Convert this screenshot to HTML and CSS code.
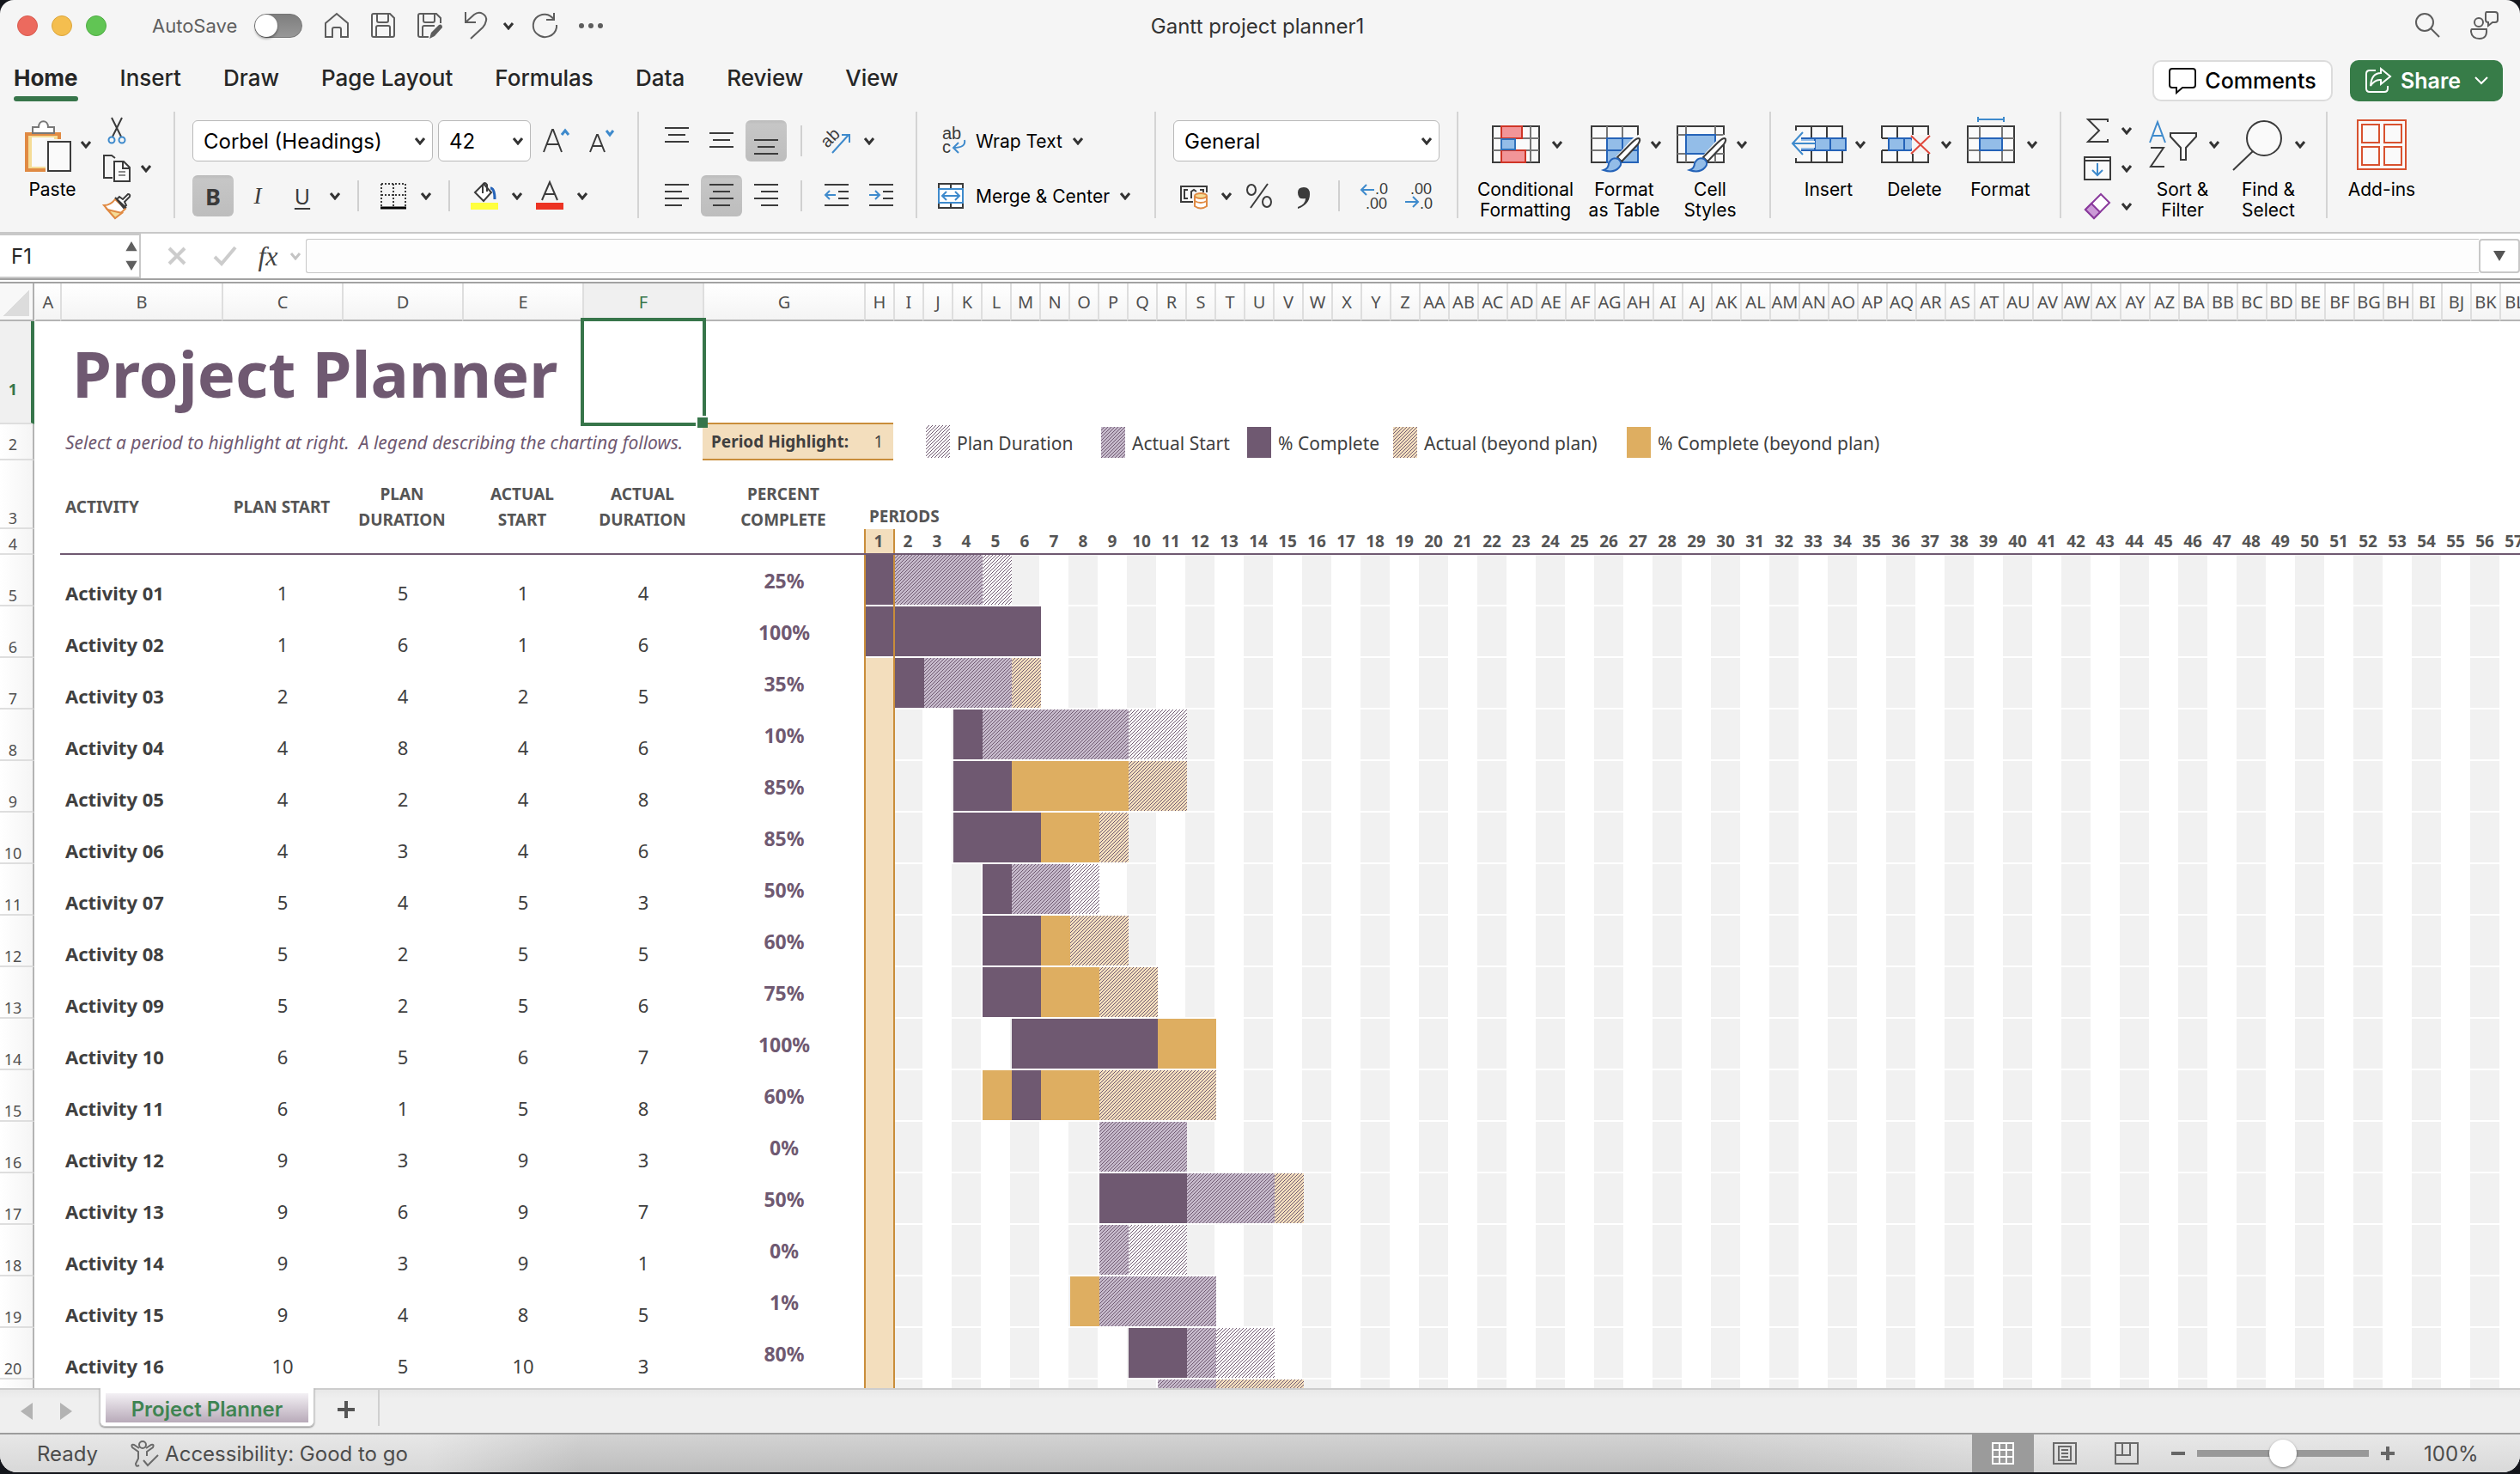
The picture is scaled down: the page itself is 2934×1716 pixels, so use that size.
FILE: index.html
```html
<!DOCTYPE html>
<html lang="en">
<head>
<meta charset="utf-8">
<title>Gantt project planner1</title>
<link rel="stylesheet" href="styles.css">
</head>
<body>
<svg class="sprite" aria-hidden="true">
  <symbol id="chev" viewBox="0 0 14 10"><path d="M2 2l5 6 5-6" fill="none" stroke="currentColor" stroke-width="3"/></symbol>
</svg>
<div class="window">
  <header class="titlebar">
    <div class="title-left">
      <div class="lights"><button class="light close" aria-label="Close"></button><button class="light minimise" aria-label="Minimise"></button><button class="light expand" aria-label="Zoom"></button></div>
      <label class="autosave">AutoSave <input type="checkbox" class="toggle"></label>
      <div class="quick">
        <button aria-label="Home"><svg viewBox="0 0 32 32"><path d="M3 13L16 2l13 11v16h-8v-9q0-2-2-2h-6q-2 0-2 2v9H3z"/></svg></button>
        <button aria-label="Save"><svg viewBox="0 0 32 32"><path d="M5 2h19l5 5v20q0 2-2 2H5q-2 0-2-2V4q0-2 2-2zM9 2v8q0 2 2 2h9q2 0 2-2V2M8 29V18q0-2 2-2h12q2 0 2 2v11"/></svg></button>
        <button aria-label="Save as"><svg viewBox="0 0 32 32"><path d="M15 29H5q-2 0-2-2V4q0-2 2-2h19l5 5v6M9 2v8q0 2 2 2h9q2 0 2-2V2M8 29V18q0-2 2-2h12"/><path class="solid" d="M16 31l2-7 9-9q2-1 3 0t1 3l-9 10z"/></svg></button>
        <button aria-label="Undo"><svg viewBox="0 0 32 32"><path d="M4 0v12h12M4 12l10-9q5-4 10-1t4 8-4 8L10 31"/></svg></button>
        <button class="mini" aria-label="Undo history"><svg class="chev"><use href="#chev"/></svg></button>
        <button aria-label="Redo"><svg viewBox="0 0 32 32"><path d="M27 1v8h-9M27 9C22 1 12 1 6 7c-5 6-4 15 2 19 7 6 20 3 22-8v-3"/></svg></button>
        <button aria-label="More"><svg viewBox="0 0 32 32"><g class="solid"><circle cx="5" cy="16" r="3"/><circle cx="16" cy="16" r="3"/><circle cx="27" cy="16" r="3"/></g></svg></button>
      </div>
    </div>
    <h1 class="doc-name">Gantt project planner1</h1>
    <div class="title-right">
      <button aria-label="Search"><svg viewBox="0 0 32 32"><circle cx="13" cy="12" r="10"/><path d="M20 19l10 10"/></svg></button>
      <button aria-label="Contacts"><svg viewBox="0 0 32 32"><circle cx="10" cy="12" r="5"/><path d="M2 20h17q1 11-8 11T1 23q0-3 1-3zM19 0h10q3 0 3 3v6q0 3-3 3h-3l-5 4v-4q-3 0-3-3V3q0-3 1-3z"/></svg></button>
    </div>
  </header>

  <nav class="tabs" aria-label="Ribbon tabs">
    <button class="tab active">Home</button><button class="tab">Insert</button><button class="tab">Draw</button><button class="tab">Page Layout</button><button class="tab">Formulas</button><button class="tab">Data</button><button class="tab">Review</button><button class="tab">View</button>
    <div class="tab-actions">
      <button class="comments"><svg viewBox="0 0 32 32"><path d="M4 2h24q3 0 3 3v16q0 3-3 3H16l-7 6v-6H4q-3 0-3-3V5q0-3 3-3z"/></svg>Comments</button>
      <button class="share"><svg viewBox="0 0 32 32"><path d="M13 4H6q-4 0-4 4v17q0 4 4 4h17q4 0 4-4v-3M19 2l11 9-11 9v-5Q12 14 7 22 8 7 19 7z"/></svg>Share<svg class="thin-chev" viewBox="0 0 16 10"><path d="M1 1l7 7 7-7"/></svg></button>
    </div>
  </nav>

  <section class="ribbon" aria-label="Home">
    <div class="group clipboard">
      <button class="big paste"><span class="big-icon"><svg viewBox="0 0 56 60"><path d="M2 16h38v42H2z" fill="#f5dc96" stroke="#e08a43" stroke-width="4"/><path d="M8 20h26v34H8z" fill="#fafafa"/><path d="M9 15V8h7c0-9 11-9 11 0h7v7z" fill="#fff" stroke="#777" stroke-width="2"/><path d="M24 22h32v38H24z" fill="#f5f5f5"/><path d="M27 25h26v34H27z" fill="#fafafa" stroke="#3b3b3b" stroke-width="2"/></svg><svg class="chev"><use href="#chev"/></svg></span><span class="big-label">Paste</span></button>
      <div class="stack">
        <div><button class="small-icon" aria-label="Cut"><svg viewBox="0 0 32 32"><path d="M10 1l11 22M22 1L11 23" stroke="#3b3b3b" stroke-width="2"/><circle cx="10" cy="27" r="3.500" stroke="#3e8acc" stroke-width="2"/><circle cx="22" cy="27" r="3.500" stroke="#3e8acc" stroke-width="2"/></svg></button></div>
        <div><button class="small-icon" aria-label="Copy"><svg viewBox="0 0 32 32"><path d="M11 27H1V1h9l4 3" stroke="#3b3b3b" stroke-width="2"/><path d="M13 8h11l7 7v16H13zM23 8v8h8" fill="#fafafa" stroke="#3b3b3b" stroke-width="2"/><path d="M18 20h8M18 24h8" stroke="#888" stroke-width="2"/></svg></button><button class="mini" aria-label="Copy options"><svg class="chev"><use href="#chev"/></svg></button></div>
        <div><button class="small-icon" aria-label="Format painter"><svg viewBox="0 0 32 32"><path d="M1 15q8 0 13-7l12 11-12 11z" fill="#fff" stroke="#e08a43" stroke-width="2"/><path d="M5 20l17 4-8 6z" fill="#f5dc96" stroke="#e08a43" stroke-width="2"/><path d="M14 6l13 12M16 8l3-3 4 3 6-6q3 0 2 3l-6 6 2 4-3 3z" fill="#fff" stroke="#3b3b3b" stroke-width="2"/></svg></button></div>
      </div>
    </div>

    <div class="group rows">
      <div class="row">
        <select class="combo font-name" aria-label="Font"><option>Corbel (Headings)</option></select>
        <select class="combo font-size" aria-label="Font size"><option>42</option></select>
        <button class="tool glyph" aria-label="Increase font size"><svg viewBox="0 0 32 32"><path d="M1 29L11 3h1l10 26M5 20h13" stroke="#3b3b3b" stroke-width="2"/><path d="M22 9l4-5 4 5" stroke="#3e8acc" stroke-width="3"/></svg></button>
        <button class="tool glyph" aria-label="Decrease font size"><svg viewBox="0 0 32 32"><path d="M3 29l8-20h1l8 20M6 22h11" stroke="#3b3b3b" stroke-width="2"/><path d="M22 4l4 5 4-5" stroke="#3e8acc" stroke-width="3"/></svg></button>
      </div>
      <div class="row">
        <button class="tool on bold">B</button><button class="tool italic">I</button><button class="tool underline">U</button><button class="mini" aria-label="Underline options"><svg class="chev"><use href="#chev"/></svg></button>
        <span class="bar-sep"></span>
        <button class="tool" aria-label="Borders"><svg viewBox="0 0 32 32"><path d="M2 2h28v26M2 2v26M16 2v26M2 15h28" stroke="#3b3b3b" stroke-width="2" stroke-dasharray="2 2"/><path d="M1 30h30" stroke="#000" stroke-width="3"/></svg></button><button class="mini" aria-label="Border options"><svg class="chev"><use href="#chev"/></svg></button>
        <span class="bar-sep"></span>
        <button class="tool" aria-label="Fill colour"><svg viewBox="0 0 32 32"><path d="M5 12L15 2l9 10-9 10zM14 13V3q2-4 5 0v8" fill="#fff" stroke="#3b3b3b" stroke-width="2"/><path d="M23 7q5 0 5 13" stroke="#2563b8" stroke-width="3"/><path d="M0 24h32v8H0z" fill="#ffff3d"/></svg></button><button class="mini" aria-label="Fill colour options"><svg class="chev"><use href="#chev"/></svg></button>
        <button class="tool" aria-label="Font colour"><svg viewBox="0 0 32 32"><path d="M7 21L16 0l9 21M11 14h11" stroke="#3b3b3b" stroke-width="2"/><path d="M0 24h32v8H0z" fill="#ec3323"/></svg></button><button class="mini" aria-label="Font colour options"><svg class="chev"><use href="#chev"/></svg></button>
      </div>
    </div>

    <div class="group rows">
      <div class="row">
        <button class="tool" aria-label="Top align"><svg viewBox="0 0 32 32"><path class="ink" d="M2 1h28M6 9h20M2 17h28"/></svg></button>
        <button class="tool" aria-label="Middle align"><svg viewBox="0 0 32 32"><path class="ink" d="M2 7h28M6 15h20M2 23h28"/></svg></button>
        <button class="tool on" aria-label="Bottom align"><svg viewBox="0 0 32 32"><path class="ink" d="M2 15h28M6 23h20M2 31h28"/></svg></button>
        <span class="bar-sep"></span>
        <button class="tool" aria-label="Orientation"><svg viewBox="0 0 32 32"><text x="2" y="23" class="icon-text" transform="rotate(-45 6 20)" font-size="20">ab</text><path d="M11 30L30 9M22 9h9v9" stroke="#3e8acc" stroke-width="2"/></svg></button><button class="mini" aria-label="Orientation options"><svg class="chev"><use href="#chev"/></svg></button>
      </div>
      <div class="row">
        <button class="tool" aria-label="Align left"><svg viewBox="0 0 32 32"><path class="ink" d="M2 3h28M2 11h20M2 19h28M2 27h20"/></svg></button>
        <button class="tool on" aria-label="Centre"><svg viewBox="0 0 32 32"><path class="ink" d="M2 3h28M6 11h20M2 19h28M6 27h20"/></svg></button>
        <button class="tool" aria-label="Align right"><svg viewBox="0 0 32 32"><path class="ink" d="M2 3h28M10 11h20M2 19h28M10 27h20"/></svg></button>
        <span class="bar-sep"></span>
        <button class="tool" aria-label="Decrease indent"><svg viewBox="0 0 32 32"><path class="ink" d="M2 3h28M18 11h12M18 19h12M2 27h28"/><path d="M15 15H3M8 10l-5 5 5 5" stroke="#3e8acc" stroke-width="2"/></svg></button>
        <button class="tool" aria-label="Increase indent"><svg viewBox="0 0 32 32"><path class="ink" d="M2 3h28M18 11h12M18 19h12M2 27h28"/><path d="M2 15h12M9 10l5 5-5 5" stroke="#3e8acc" stroke-width="2"/></svg></button>
      </div>
    </div>

    <div class="group rows">
      <div class="row"><button class="wide"><svg viewBox="0 0 40 32"><text x="9" y="14" class="icon-text" font-size="20">ab</text><text x="9" y="30" class="icon-text" font-size="20">c</text><path d="M35 15q2 9-13 9M28 18l-6 6 6 6" stroke="#3e8acc" stroke-width="2"/></svg>Wrap Text<svg class="chev"><use href="#chev"/></svg></button></div>
      <div class="row"><button class="wide"><svg viewBox="0 0 40 32"><path d="M5 2h28v28H5zM19 2v28" fill="#fff" stroke="#3b3b3b" stroke-width="2"/><path d="M5 8h28v16H5z" fill="#fff" stroke="#3e8acc" stroke-width="2"/><path d="M9 16h20M14 11l-5 5 5 5M24 11l5 5-5 5" stroke="#3e8acc" stroke-width="2"/></svg>Merge &amp; Center<svg class="chev"><use href="#chev"/></svg></button></div>
    </div>

    <div class="group rows">
      <div class="row"><select class="combo number-format" aria-label="Number format"><option>General</option></select></div>
      <div class="row">
        <button class="tool" aria-label="Currency"><svg viewBox="0 0 32 32"><path d="M1 5h30v18H1z" fill="#fafafa" stroke="#3b3b3b" stroke-width="2"/><path d="M9 9H5v10h4M13 19v-8l3-2 3 2M23 9h4v4" stroke="#3b3b3b" stroke-width="2"/><path d="M15 12h18v20H15z" fill="#f5f5f5"/><path d="M17 16v12q7 5 14 0V16M17 22q7 4 14 0" fill="#fff" stroke="#e08a43" stroke-width="2"/><ellipse cx="24" cy="16" rx="7" ry="3" fill="#f5dc96" stroke="#e08a43" stroke-width="2"/></svg></button><button class="mini" aria-label="Currency options"><svg class="chev"><use href="#chev"/></svg></button>
        <button class="tool" aria-label="Percent"><svg viewBox="0 0 32 32"><path d="M26 2L6 30" stroke="#3b3b3b" stroke-width="2"/><ellipse cx="7" cy="9" rx="5" ry="6" stroke="#3b3b3b" stroke-width="2"/><ellipse cx="25" cy="23" rx="5" ry="6" stroke="#3b3b3b" stroke-width="2"/></svg></button>
        <button class="tool" aria-label="Comma"><svg viewBox="0 0 32 32"><path d="M9 29q9-3 9-10-9 2-9-7 0-6 7-6t7 8q0 12-14 17z" fill="#3b3b3b"/></svg></button>
        <span class="bar-sep"></span>
        <button class="tool" aria-label="Increase decimal"><svg viewBox="0 0 32 32"><text x="17" y="14" class="icon-text" font-size="18">.0</text><text x="6" y="31" class="icon-text" font-size="18">.00</text><path d="M16 9H1M7 3L1 9l6 6" stroke="#3e8acc" stroke-width="2"/></svg></button>
        <button class="tool" aria-label="Decrease decimal"><svg viewBox="0 0 32 32"><text x="6" y="14" class="icon-text" font-size="18">.00</text><text x="17" y="31" class="icon-text" font-size="18">.0</text><path d="M0 23h15M9 17l6 6-6 6" stroke="#3e8acc" stroke-width="2"/></svg></button>
      </div>
    </div>

    <div class="group">
      <button class="big cond"><span class="big-icon"><svg viewBox="0 0 56 60"><path d="M1 7h54v42H1z" fill="#fafafa" stroke="#3b3b3b" stroke-width="2"/><path d="M1 21h54M1 35h54M11 7v42M45 7v42" stroke="#777" stroke-width="2"/><path d="M11 7h24v14H11zM11 35h28v14H11z" fill="#f29598" stroke="#cf3526" stroke-width="2"/><path d="M11 22h16v12H11z" fill="#93bde8" stroke="#3172bb" stroke-width="2"/></svg><svg class="chev"><use href="#chev"/></svg></span><span class="big-label">Conditional<br>Formatting</span></button>
      <button class="big"><span class="big-icon"><svg viewBox="0 0 56 60"><path d="M1 7h54v42H1z" fill="#fafafa" stroke="#3b3b3b" stroke-width="2"/><path d="M1 21h54M1 35h54M19 7v42M37 7v42" stroke="#777" stroke-width="2"/><path d="M19 21h36v28H19zM37 21v28M19 35h36" fill="#93bde8" stroke="#2563b8" stroke-width="2"/><path d="M12 60q14 4 22-10L62 18q-6-4-14 4L28 44q-8 2-10 11z" fill="#f5f5f5"/><path d="M56 21q3 1-1 7L36 48l-5-5 17-17q5-5 8-5z" fill="#fff" stroke="#3b3b3b" stroke-width="2"/><path d="M15 58q6-2 6-8 4-8 11-5 6 5 1 10-6 7-18 3z" fill="#93bde8" stroke="#2563b8" stroke-width="2"/></svg><svg class="chev"><use href="#chev"/></svg></span><span class="big-label">Format<br>as Table</span></button>
      <button class="big"><span class="big-icon"><svg viewBox="0 0 56 60"><path d="M1 7h54v42H1z" fill="#fafafa" stroke="#3b3b3b" stroke-width="2"/><path d="M1 17h54M1 39h54M11 7v42M45 7v42" stroke="#777" stroke-width="2"/><path d="M11 17h34v22H11z" fill="#93bde8" stroke="#2563b8" stroke-width="2"/><path d="M12 60q14 4 22-10L62 18q-6-4-14 4L28 44q-8 2-10 11z" fill="#f5f5f5"/><path d="M56 21q3 1-1 7L36 48l-5-5 17-17q5-5 8-5z" fill="#fff" stroke="#3b3b3b" stroke-width="2"/><path d="M15 58q6-2 6-8 4-8 11-5 6 5 1 10-6 7-18 3z" fill="#93bde8" stroke="#2563b8" stroke-width="2"/></svg><svg class="chev"><use href="#chev"/></svg></span><span class="big-label">Cell<br>Styles</span></button>
    </div>

    <div class="group cells">
      <button class="big"><span class="big-icon"><svg viewBox="0 0 56 60"><path d="M1 7h54v42H1zM19 7v42M37 7v42" fill="#fafafa" stroke="#3b3b3b" stroke-width="2"/><path d="M3 21h56v14H3zM23 21v14M41 21v14" fill="#93bde8" stroke="#2563b8" stroke-width="2"/><path d="M-6 12h13v12h16v8H7v12H-6z" fill="#f5f5f5"/><path d="M23 27H-3M9 14L-3 27 9 40" stroke="#3e8acc" stroke-width="2"/></svg><svg class="chev"><use href="#chev"/></svg></span><span class="big-label">Insert</span></button>
      <button class="big"><span class="big-icon"><svg viewBox="0 0 56 60"><path d="M1 7h54v42H1zM19 7v42M37 7v42" fill="#fafafa" stroke="#3b3b3b" stroke-width="2"/><path d="M0 21h9v14H0z" fill="#f5f5f5"/><path d="M1 21h8M1 35h8" stroke="#3b3b3b" stroke-width="2"/><path d="M9 21h26l6 7-6 7H9zM27 21v14" fill="#93bde8" stroke="#2563b8" stroke-width="2"/><path d="M36 17h22v22H36z" fill="#f5f5f5"/><path d="M35 18l22 21M57 18L35 39" stroke="#e0483c" stroke-width="2"/></svg><svg class="chev"><use href="#chev"/></svg></span><span class="big-label">Delete</span></button>
      <button class="big"><span class="big-icon"><svg viewBox="0 0 56 60"><path d="M1 7h54v42H1z" fill="#fafafa" stroke="#3b3b3b" stroke-width="2"/><path d="M1 21h54M1 35h54M15 7v42M41 7v42" stroke="#777" stroke-width="2"/><path d="M15 21h26v14H15z" fill="#93bde8" stroke="#2563b8" stroke-width="2"/><path d="M13-1h30M13-4v6M43-4v6" stroke="#3e8acc" stroke-width="2"/></svg><svg class="chev"><use href="#chev"/></svg></span><span class="big-label">Format</span></button>
    </div>

    <div class="group editing">
      <div class="stack">
        <div><button class="small-icon" aria-label="AutoSum"><svg viewBox="0 0 32 32"><path d="M28 6V3H5l13 13L5 29h23v-3" stroke="#3b3b3b" stroke-width="2"/></svg></button><button class="mini" aria-label="AutoSum options"><svg class="chev"><use href="#chev"/></svg></button></div>
        <div><button class="small-icon" aria-label="Fill"><svg viewBox="0 0 32 32"><path d="M1 3h30v26H1zM1 7h30" fill="#fafafa" stroke="#3b3b3b" stroke-width="2"/><path d="M16 10v14M10 18l6 6 6-6" stroke="#3e8acc" stroke-width="2"/></svg></button><button class="mini" aria-label="Fill options"><svg class="chev"><use href="#chev"/></svg></button></div>
        <div><button class="small-icon" aria-label="Clear"><svg viewBox="0 0 32 32"><path d="M20 2l10 10-18 18L2 20z" fill="#fff" stroke="#8a3a9c" stroke-width="2"/><path d="M9 13l10 10-7 7L2 20z" fill="#cb9ad6" stroke="#8a3a9c" stroke-width="2"/></svg></button><button class="mini" aria-label="Clear options"><svg class="chev"><use href="#chev"/></svg></button></div>
      </div>
      <button class="big"><span class="big-icon"><svg viewBox="0 0 56 60"><path d="M1 26L10 2l9 24M4 18h12" stroke="#3e8acc" stroke-width="2"/><path d="M2 32h15L2 54h16" stroke="#3b3b3b" stroke-width="2"/><path d="M25 15h30v4L43 32v14h-6V32L25 19z" fill="#fafafa" stroke="#3b3b3b" stroke-width="2"/></svg><svg class="chev"><use href="#chev"/></svg></span><span class="big-label">Sort &amp;<br>Filter</span></button>
      <button class="big"><span class="big-icon"><svg viewBox="0 0 56 60"><circle cx="34" cy="21" r="20" fill="#fafafa" stroke="#3b3b3b" stroke-width="2"/><path d="M21 36L-2 58" stroke="#3b3b3b" stroke-width="2"/></svg><svg class="chev"><use href="#chev"/></svg></span><span class="big-label">Find &amp;<br>Select</span></button>
    </div>

    <div class="group last">
      <button class="big addins"><span class="big-icon"><svg viewBox="0 0 56 60"><path d="M0 0h56v57H0zM5 5h20v21H5zM31 5h20v21H31zM5 31h20v21H5zM31 31h20v21H31z" fill="#fafafa" stroke="#d8522f" stroke-width="2"/></svg></span><span class="big-label">Add-ins</span></button>
    </div>
  </section>

  <section class="formula-bar" aria-label="Formula bar">
    <div class="name-box"><input type="text" value="F1" aria-label="Name box"><svg viewBox="0 0 14 36"><path d="M7 0l7 12H0zM7 36l7-12H0z"/></svg></div>
    <button class="fx-tool faint" aria-label="Cancel"><svg viewBox="0 0 28 28"><path d="M5 5l18 18M23 5L5 23"/></svg></button>
    <button class="fx-tool faint" aria-label="Enter"><svg viewBox="0 0 28 28"><path d="M2 15l8 8L26 4"/></svg></button>
    <button class="fx-tool fx" aria-label="Insert function">fx</button>
    <button class="mini fx-more" aria-label="Functions"><svg class="chev"><use href="#chev"/></svg></button>
    <input class="formula" type="text" aria-label="Formula">
    <button class="expand-bar" aria-label="Expand formula bar"><svg viewBox="0 0 14 12"><path d="M0 0h14L7 12z"/></svg></button>
  </section>

  <main class="sheet">
    <table class="grid">
      <colgroup><col class="c-head"><col class="c-a"><col class="c-name"><col class="c-num" span="4"><col class="c-name"><col class="c-period" span="57"></colgroup>
      <thead><tr class="letters"><th class="corner"></th><th>A</th><th>B</th><th>C</th><th>D</th><th>E</th><th class="picked">F</th><th>G</th><th>H</th><th>I</th><th>J</th><th>K</th><th>L</th><th>M</th><th>N</th><th>O</th><th>P</th><th>Q</th><th>R</th><th>S</th><th>T</th><th>U</th><th>V</th><th>W</th><th>X</th><th>Y</th><th>Z</th><th>AA</th><th>AB</th><th>AC</th><th>AD</th><th>AE</th><th>AF</th><th>AG</th><th>AH</th><th>AI</th><th>AJ</th><th>AK</th><th>AL</th><th>AM</th><th>AN</th><th>AO</th><th>AP</th><th>AQ</th><th>AR</th><th>AS</th><th>AT</th><th>AU</th><th>AV</th><th>AW</th><th>AX</th><th>AY</th><th>AZ</th><th>BA</th><th>BB</th><th>BC</th><th>BD</th><th>BE</th><th>BF</th><th>BG</th><th>BH</th><th>BI</th><th>BJ</th><th>BK</th><th>BL</th></tr></thead>
      <tbody>
        <tr class="r1"><th class="rh picked">1</th><td></td><td colspan="4" class="title">Project Planner</td><td class="selected"></td><td colspan="2" class="above-highlight"></td><td colspan="56"></td></tr>
        <tr class="r2"><th class="rh">2</th><td></td><td colspan="5" class="note">Select a period to highlight at right.&nbsp; A legend describing the charting follows.</td><td class="hl hl-label">Period Highlight:</td><td class="hl hl-value">1</td>
          <td colspan="56"><ul class="legend"><li><i class="swatch tall plan"></i>Plan Duration</li><li><i class="swatch actual"></i>Actual Start</li><li><i class="swatch done"></i>% Complete</li><li class="long"><i class="swatch beyond"></i>Actual (beyond plan)</li><li class="long"><i class="swatch done-beyond"></i>% Complete (beyond plan)</li></ul></td></tr>
        <tr class="r3"><th class="rh">3</th><td rowspan="2"></td><th rowspan="2" class="head left">ACTIVITY</th><th rowspan="2" class="head">PLAN START</th><th rowspan="2" class="head">PLAN<br>DURATION</th><th rowspan="2" class="head">ACTUAL<br>START</th><th rowspan="2" class="head">ACTUAL<br>DURATION</th><th rowspan="2" class="head">PERCENT<br>COMPLETE</th><th colspan="57" class="periods">PERIODS</th></tr>
        <tr class="r4"><th class="rh">4</th><th class="current">1</th><th>2</th><th>3</th><th>4</th><th>5</th><th>6</th><th>7</th><th>8</th><th>9</th><th>10</th><th>11</th><th>12</th><th>13</th><th>14</th><th>15</th><th>16</th><th>17</th><th>18</th><th>19</th><th>20</th><th>21</th><th>22</th><th>23</th><th>24</th><th>25</th><th>26</th><th>27</th><th>28</th><th>29</th><th>30</th><th>31</th><th>32</th><th>33</th><th>34</th><th>35</th><th>36</th><th>37</th><th>38</th><th>39</th><th>40</th><th>41</th><th>42</th><th>43</th><th>44</th><th>45</th><th>46</th><th>47</th><th>48</th><th>49</th><th>50</th><th>51</th><th>52</th><th>53</th><th>54</th><th>55</th><th>56</th><th>57</th></tr>
        <tr class="act"><th class="rh">5</th><td></td><td class="name">Activity 01</td><td>1</td><td>5</td><td>1</td><td>4</td><td class="pct">25%</td><td colspan="57" class="chart"><div class="bars"><i class="done" style="--s:1;--n:1"></i><i class="actual" style="--s:2;--n:3"></i><i class="plan" style="--s:5;--n:1"></i></div></td></tr>
        <tr class="act"><th class="rh">6</th><td></td><td class="name">Activity 02</td><td>1</td><td>6</td><td>1</td><td>6</td><td class="pct">100%</td><td colspan="57" class="chart"><div class="bars"><i class="done" style="--s:1;--n:6"></i></div></td></tr>
        <tr class="act"><th class="rh">7</th><td></td><td class="name">Activity 03</td><td>2</td><td>4</td><td>2</td><td>5</td><td class="pct">35%</td><td colspan="57" class="chart"><div class="bars"><i class="done" style="--s:2;--n:1"></i><i class="actual" style="--s:3;--n:3"></i><i class="beyond" style="--s:6;--n:1"></i></div></td></tr>
        <tr class="act"><th class="rh">8</th><td></td><td class="name">Activity 04</td><td>4</td><td>8</td><td>4</td><td>6</td><td class="pct">10%</td><td colspan="57" class="chart"><div class="bars"><i class="done" style="--s:4;--n:1"></i><i class="actual" style="--s:5;--n:5"></i><i class="plan" style="--s:10;--n:2"></i></div></td></tr>
        <tr class="act"><th class="rh">9</th><td></td><td class="name">Activity 05</td><td>4</td><td>2</td><td>4</td><td>8</td><td class="pct">85%</td><td colspan="57" class="chart"><div class="bars"><i class="done" style="--s:4;--n:2"></i><i class="done-beyond" style="--s:6;--n:4"></i><i class="beyond" style="--s:10;--n:2"></i></div></td></tr>
        <tr class="act"><th class="rh">10</th><td></td><td class="name">Activity 06</td><td>4</td><td>3</td><td>4</td><td>6</td><td class="pct">85%</td><td colspan="57" class="chart"><div class="bars"><i class="done" style="--s:4;--n:3"></i><i class="done-beyond" style="--s:7;--n:2"></i><i class="beyond" style="--s:9;--n:1"></i></div></td></tr>
        <tr class="act"><th class="rh">11</th><td></td><td class="name">Activity 07</td><td>5</td><td>4</td><td>5</td><td>3</td><td class="pct">50%</td><td colspan="57" class="chart"><div class="bars"><i class="done" style="--s:5;--n:1"></i><i class="actual" style="--s:6;--n:2"></i><i class="plan" style="--s:8;--n:1"></i></div></td></tr>
        <tr class="act"><th class="rh">12</th><td></td><td class="name">Activity 08</td><td>5</td><td>2</td><td>5</td><td>5</td><td class="pct">60%</td><td colspan="57" class="chart"><div class="bars"><i class="done" style="--s:5;--n:2"></i><i class="done-beyond" style="--s:7;--n:1"></i><i class="beyond" style="--s:8;--n:2"></i></div></td></tr>
        <tr class="act"><th class="rh">13</th><td></td><td class="name">Activity 09</td><td>5</td><td>2</td><td>5</td><td>6</td><td class="pct">75%</td><td colspan="57" class="chart"><div class="bars"><i class="done" style="--s:5;--n:2"></i><i class="done-beyond" style="--s:7;--n:2"></i><i class="beyond" style="--s:9;--n:2"></i></div></td></tr>
        <tr class="act"><th class="rh">14</th><td></td><td class="name">Activity 10</td><td>6</td><td>5</td><td>6</td><td>7</td><td class="pct">100%</td><td colspan="57" class="chart"><div class="bars"><i class="done" style="--s:6;--n:5"></i><i class="done-beyond" style="--s:11;--n:2"></i></div></td></tr>
        <tr class="act"><th class="rh">15</th><td></td><td class="name">Activity 11</td><td>6</td><td>1</td><td>5</td><td>8</td><td class="pct">60%</td><td colspan="57" class="chart"><div class="bars"><i class="done-beyond" style="--s:5;--n:1"></i><i class="done" style="--s:6;--n:1"></i><i class="done-beyond" style="--s:7;--n:2"></i><i class="beyond" style="--s:9;--n:4"></i></div></td></tr>
        <tr class="act"><th class="rh">16</th><td></td><td class="name">Activity 12</td><td>9</td><td>3</td><td>9</td><td>3</td><td class="pct">0%</td><td colspan="57" class="chart"><div class="bars"><i class="actual" style="--s:9;--n:3"></i></div></td></tr>
        <tr class="act"><th class="rh">17</th><td></td><td class="name">Activity 13</td><td>9</td><td>6</td><td>9</td><td>7</td><td class="pct">50%</td><td colspan="57" class="chart"><div class="bars"><i class="done" style="--s:9;--n:3"></i><i class="actual" style="--s:12;--n:3"></i><i class="beyond" style="--s:15;--n:1"></i></div></td></tr>
        <tr class="act"><th class="rh">18</th><td></td><td class="name">Activity 14</td><td>9</td><td>3</td><td>9</td><td>1</td><td class="pct">0%</td><td colspan="57" class="chart"><div class="bars"><i class="actual" style="--s:9;--n:1"></i><i class="plan" style="--s:10;--n:2"></i></div></td></tr>
        <tr class="act"><th class="rh">19</th><td></td><td class="name">Activity 15</td><td>9</td><td>4</td><td>8</td><td>5</td><td class="pct">1%</td><td colspan="57" class="chart"><div class="bars"><i class="done-beyond" style="--s:8;--n:1"></i><i class="actual" style="--s:9;--n:4"></i></div></td></tr>
        <tr class="act"><th class="rh">20</th><td></td><td class="name">Activity 16</td><td>10</td><td>5</td><td>10</td><td>3</td><td class="pct">80%</td><td colspan="57" class="chart"><div class="bars"><i class="done" style="--s:10;--n:2"></i><i class="actual" style="--s:12;--n:1"></i><i class="plan" style="--s:13;--n:2"></i></div></td></tr>
        <tr class="act"><th class="rh"></th><td></td><td></td><td></td><td></td><td></td><td></td><td></td><td colspan="57" class="chart"><div class="bars"><i class="actual" style="--s:11;--n:2"></i><i class="beyond" style="--s:13;--n:3"></i></div></td></tr>
      </tbody>
    </table>
  </main>

  <nav class="sheet-tabs" aria-label="Sheets">
    <button class="arrow" aria-label="Previous sheet"><svg viewBox="0 0 14 20"><path d="M14 0v20L0 10z"/></svg></button>
    <button class="arrow" aria-label="Next sheet"><svg viewBox="0 0 14 20"><path d="M0 0v20l14-10z"/></svg></button>
    <button class="sheet-tab"><span>Project Planner</span></button>
    <button class="add-sheet" aria-label="Add sheet"><svg viewBox="0 0 20 20"><path d="M10 0v20M0 10h20"/></svg></button>
  </nav>

  <footer class="status">
    <span class="ready">Ready</span>
    <button class="access"><svg viewBox="0 0 32 32"><circle cx="14" cy="6" r="4"/><path d="M10 10L4 6Q0 5 2 9l7 5v8l-3 6q0 4 4 2M18 10l6-4q4-1 2 3l-7 5v5M15 24l5 6L32 18"/></svg>Accessibility: Good to go</button>
    <div class="view-tools">
      <button class="view on" aria-label="Normal view"><svg viewBox="0 0 28 28"><path d="M2 2h24v24H2zM10 2v24M18 2v24M2 10h24M2 18h24"/></svg></button>
      <button class="view" aria-label="Page layout view"><svg viewBox="0 0 28 28"><path d="M1 2h26v24H1z"/><path d="M7 6h14v16H7zM10 10h8M10 14h8M10 18h8"/></svg></button>
      <button class="view" aria-label="Page break view"><svg viewBox="0 0 28 28"><path d="M1 2h26v24H1zM9 2v14M18 2v14H1"/></svg></button>
      <button class="zoom-step first" aria-label="Zoom out"><svg viewBox="0 0 16 16"><path d="M0 8h16"/></svg></button>
      <input class="zoom" type="range" min="0" max="100" value="50" aria-label="Zoom">
      <button class="zoom-step" aria-label="Zoom in"><svg viewBox="0 0 16 16"><path d="M0 8h16M8 0v16"/></svg></button>
      <output class="zoom-value">100%</output>
    </div>
  </footer>
</div>
</body>
</html>
```
FILE: styles.css
```css
*, *::before, *::after { box-sizing: border-box; }
html, body { height: 100%; margin: 0; }
body { background: #14161c; font-family: Inter, "Liberation Sans", sans-serif; font-size: 21px; color: #262626; overflow: hidden; }
button { margin: 0; padding: 0; border: 0; background: none; font: inherit; color: inherit; display: flex; align-items: center; justify-content: center; }
svg { fill: none; overflow: visible; display: block; flex: none; }
.sprite { position: absolute; width: 0; height: 0; }
.chev { width: 14px; height: 10px; color: #333; }
.mini { width: 20px; height: 40px; }

.window { display: flex; flex-direction: column; height: calc(100vh - 2px); background: #f5f5f5; border-radius: 16px 16px 20px 20px; overflow: hidden; }

/* title bar */
.titlebar { display: grid; grid-template-columns: 1fr auto 1fr; align-items: center; height: 60px; padding: 0 26px 0 20px; }
.title-left, .title-right, .quick, .lights { display: flex; align-items: center; }
.lights { gap: 16px; }
.light { width: 24px; height: 24px; border-radius: 50%; border: 1px solid #d85a4e; background: #ec6a5e; }
.light.minimise { background: #f4be4f; border-color: #dca63c; }
.light.expand { background: #61c554; border-color: #50ad45; }
.autosave { display: flex; align-items: center; gap: 20px; margin-left: 53px; font-size: 22px; color: #5f5f5f; }
.toggle { appearance: none; width: 56px; height: 28px; margin: 0; border-radius: 14px; background: linear-gradient(#7e7e7e, #989898); border: 1px solid #757575; }
.toggle::before { content: ""; display: block; width: 26px; height: 26px; border-radius: 50%; background: #fff; box-shadow: 0 2px 3px #0006; }
.quick { gap: 22px; margin-left: 24px; }
.quick .mini { margin: 0 -6px 0 -10px; }
.quick svg:not(.chev), .title-right svg { width: 32px; height: 32px; stroke: #5d5d5d; stroke-width: 2; }
.quick .solid { fill: #5d5d5d; stroke: none; }
.doc-name { margin: 0; font-size: 24px; font-weight: 400; color: #333; }
.title-right { justify-content: flex-end; gap: 34px; }

/* ribbon tabs */
.tabs { display: flex; align-items: flex-start; gap: 49px; height: 68px; padding: 0 20px 0 16px; }
.tab { height: 58px; padding: 14px 0 4px; border-bottom: 6px solid transparent; line-height: 34px; font-size: 26px; font-weight: 500; }
.tab.active { position: relative; font-weight: 700; }
.tab.active::after { content: ""; position: absolute; left: 0; right: 0; bottom: -6px; height: 6px; border-radius: 3px; background: #37754a; }
.tab-actions { display: flex; gap: 20px; margin: 10px 0 0 auto; }
.comments, .share { height: 48px; border-radius: 10px; font-size: 25px; font-weight: 500; color: #000; }
.comments { width: 210px; gap: 10px; background: #fff; border: 2px solid #dcdcdc; }
.comments svg { width: 32px; height: 32px; stroke: #111; stroke-width: 2; }
.share { width: 178px; gap: 10px; background: #377c48; color: #fff; font-weight: 600; }
.share svg { width: 32px; height: 32px; stroke: #fff; stroke-width: 2; }
.share .thin-chev { width: 16px; height: 10px; margin-left: 6px; }

/* ribbon */
.ribbon { display: grid; grid-template-columns: 204px 540px 324px 278px 352px 364px 338px 310px auto; height: 144px; padding: 2px 0 16px; border-bottom: 2px solid #c8c8c8; }
.group { display: flex; align-items: flex-start; gap: 14px; height: 124px; padding: 10px 0 0 22px; border-right: 2px solid #d4d4d4; }
.group.rows { flex-direction: column; gap: 16px; padding-left: 20px; }
.group.clipboard { gap: 12px; padding-left: 28px; }
.group.cells, .group.editing { padding-left: 26px; }
.group.last { border: 0; padding-left: 20px; }
.row { display: flex; align-items: center; gap: 4px; height: 48px; }
.tool { width: 48px; height: 48px; border-radius: 6px; color: #3b3b3b; font-size: 27px; }
.tool svg, .small-icon svg { width: 32px; height: 32px; }
.tool.on { background: linear-gradient(#bbb, #c6c6c6 10%, #bdbdbd); }
.ink { stroke: #3b3b3b; stroke-width: 2; }
.icon-text { font-family: "Liberation Sans", sans-serif; fill: #3b3b3b; }
.bold { font-family: "Noto Sans", sans-serif; font-weight: 700; }
.italic { font-family: "Liberation Serif", serif; font-style: italic; }
.underline { font-family: "Noto Sans", sans-serif; font-size: 25px; text-decoration: underline; text-underline-offset: 4px; }
.bar-sep { width: 2px; height: 36px; margin: 0 12px; background: #d0d0d0; }
.combo { appearance: none; height: 48px; margin: 0; padding: 0 12px; border: 1px solid #b9b9b9; border-radius: 6px; font: 24px Inter, "Liberation Sans", sans-serif; color: #000; background: #fff url("data:image/svg+xml,%3Csvg xmlns='http://www.w3.org/2000/svg' viewBox='0 0 14 10'%3E%3Cpath d='M2 2l5 6 5-6' fill='none' stroke='%23333' stroke-width='3'/%3E%3C/svg%3E") no-repeat right 7px center / 14px 10px; }
.font-name { width: 280px; }
.font-size { width: 108px; margin: 0 2px; }
.number-format { width: 310px; }
.wide { gap: 8px; color: #000; }
.wide svg:not(.chev) { width: 40px; height: 32px; }
.wide .chev { margin-left: 3px; }
.big { flex-direction: column; width: 86px; color: #000; }
.big.cond { width: 116px; }
.big.paste { width: 80px; }
.big-icon { display: flex; align-items: center; gap: 13px; height: 60px; }
.paste .big-icon { gap: 8px; }
.big-icon svg:not(.chev) { width: 56px; height: 60px; }
.big-icon .chev { margin-bottom: 4px; }
.big-label { margin: 9px 4px 0 0; line-height: 24px; text-align: center; white-space: nowrap; }
.paste .big-label { margin-right: 14px; }
.addins .big-label { margin-right: 0; }
.stack { display: flex; flex-direction: column; gap: 4px; margin-top: -8px; }
.stack > div { display: flex; align-items: center; gap: 8px; height: 40px; }

/* formula bar */
.formula-bar { display: flex; align-items: center; height: 58px; background: #fff; border-bottom: 6px double #a2a2a2; }
.name-box { display: flex; align-items: center; width: 164px; height: 52px; padding: 0 2px 0 13px; border: solid #c8c8c8; border-width: 2px 2px 2px 0; }
.name-box input { flex: 1; min-width: 0; border: 0; padding: 0; background: none; font: 24px Inter, sans-serif; color: #262626; }
.name-box svg { width: 14px; height: 34px; fill: #5f5f5f; }
.fx-tool { width: 28px; height: 28px; margin-left: 28px; }
.fx-tool svg { width: 28px; height: 28px; stroke: #ccc; stroke-width: 4; }
.fx { margin-left: 22px; font: italic 32px "Liberation Serif", serif; color: #444; }
.fx-more { margin: 0 2px 0 8px; }
.fx-more .chev { color: #c4c4c4; }
.formula { flex: 1; height: 40px; border: 1px solid #c8c8c8; border-right: 0; background: #fdfdfd; border-radius: 3px 0 0 3px; }
.expand-bar { width: 48px; height: 40px; border: 2px solid #c8c8c8; border-radius: 4px; background: #fff; }
.expand-bar svg { width: 14px; height: 12px; fill: #555; }

/* worksheet */
.sheet { flex: 1; min-height: 0; overflow: hidden; background: #fff; font-family: "Noto Sans", sans-serif; }
.grid { table-layout: fixed; width: 2944px; border-collapse: separate; border-spacing: 0; color: #404040; }
.c-head { width: 40px; }
.c-a { width: 30px; }
.c-name { width: 188px; }
.c-num { width: 140px; }
.c-period { width: 34px; }
.grid th, .grid td { padding: 0; text-align: center; white-space: nowrap; }
.letters th { height: 44px; border-left: 2px solid #dedede; border-bottom: 2px solid #b4b4b4; background: linear-gradient(#fff, #f4f4f4); font-size: 20px; font-weight: 400; color: #505050; }
.letters .corner { border-left: 0; border-right: 2px solid #b0b0b0; background: linear-gradient(to bottom right, transparent 50%, #dcdcdc 50%) no-repeat 4px 8px / 30px 30px, #f8f8f8; }
.letters th:nth-child(2) { border-left-color: transparent; }
.letters .picked { background: #f0f0f0; color: #37754a; }
.grid .rh { padding: 0 8px 0 0; border-right: 2px solid #b4b4b4; border-bottom: 2px solid #dedede; background: linear-gradient(90deg, #fff, #f5f5f5); font-size: 18px; font-weight: 400; line-height: 22px; vertical-align: bottom; color: #505050; }
.grid .rh.picked { padding: 0 6px 28px 0; border-right: 4px solid #37754a; background: #f0f0f0; color: #37754a; font-weight: 700; }
.r1 > * { height: 120px; }
.r2 > * { height: 42px; }
.grid .r2 .rh { padding-bottom: 6px; }
.r3 > .rh, .r3 > .periods { height: 80px; }
.r4 > * { height: 30px; }
.grid .title { padding: 2px 0 0 14px; text-align: left; font-size: 74px; font-weight: 700; line-height: 100px; color: #6f5971; }
.selected { position: relative; }
.selected::before { content: ""; position: absolute; inset: -4px -4px -2px -2px; border: 4px solid #37754a; z-index: 2; }
.selected::after { content: ""; position: absolute; right: -6px; bottom: -4px; width: 14px; height: 14px; border: solid #fff; border-width: 2px 0 0 2px; background: #37754a; z-index: 3; }
.above-highlight { border-bottom: 2px solid #c98d3a; }
.grid .note { padding-left: 6px; text-align: left; font-size: 21px; font-style: italic; color: #6f5971; line-height: 30px; }
.hl { background: #f3debd; border-bottom: 2px solid #c98d3a; font-size: 19px; }
.grid .hl-label { padding-left: 10px; text-align: left; font-weight: 700; }
.legend { display: flex; margin: 0; padding: 0 0 0 38px; list-style: none; font-size: 21px; line-height: 40px; }
.legend li { display: flex; align-items: flex-end; width: 170px; gap: 8px; }
.legend li:first-child { width: 204px; }
.legend .long { width: 272px; }
.swatch { flex: none; width: 28px; height: 36px; margin-bottom: 3px; }
.swatch.tall { height: 38px; }
.head { border-bottom: 2px solid #6f5971; font-size: 19px; font-weight: 700; line-height: 30px; color: #555; }
.grid .left { padding-left: 6px; text-align: left; }
.grid .periods { padding: 0 0 2px 6px; text-align: left; vertical-align: bottom; font-size: 19px; line-height: 26px; color: #555; }
.r4 th:not(.rh) { border-bottom: 2px solid #6f5971; font-size: 19px; line-height: 26px; color: #555; }
.r4 .current { position: relative; background: #f3debd; }
.current::after, .chart::after { content: ""; position: absolute; top: 0; bottom: 0; left: 0; width: 36px; border: solid #c98d3a; border-width: 0 2px; }
.act > * { height: 60px; }
.act td { padding-left: 2px; font-size: 22px; line-height: 32px; vertical-align: bottom; }
.grid .name { padding-left: 6px; text-align: left; font-weight: 700; }
.act .pct { vertical-align: middle; font-size: 23px; font-weight: 700; color: #6f5971; }
.act .chart { position: relative; vertical-align: top; background: linear-gradient(#f3debd, #f3debd) no-repeat 0 0 / 34px 100%, repeating-linear-gradient(90deg, transparent 0 34px, #f1f1f1 34px 68px) no-repeat 0 0 / 100% 58px; }
.bars { display: grid; grid-template-columns: repeat(57, 34px); height: 60px; }
.bars i { grid-row: 1; grid-column: var(--s) / span var(--n); border-bottom: 2px solid #fff; background-clip: padding-box; }
.plan, .actual, .beyond { background-image: url("data:image/svg+xml,%3Csvg xmlns='http://www.w3.org/2000/svg' width='4' height='4' shape-rendering='crispEdges'%3E%3Cpath fill='%236f5971' d='M0 3h1v1H0zM1 2h1v1H1zM2 1h1v1H2zM3 0h1v1H3z'/%3E%3C/svg%3E"); }
.plan { background-color: #fff; }
.actual { background-color: #c6bacb; }
.beyond { background-color: #f3debd; }
.done { background-color: #6f5971; }
.done-beyond { background-color: #deae61; }

/* sheet tabs */
.sheet-tabs { display: flex; align-items: center; height: 52px; padding: 0 0 0 24px; border-top: 2px solid #cdcdcd; background: linear-gradient(#e8e8e8, #efefef 20%); }
.arrow { width: 14px; margin-right: 32px; }
.arrow svg { width: 14px; height: 20px; fill: #b3b3b3; }
.sheet-tab { align-self: flex-start; width: 250px; height: 45px; margin-top: -2px; padding: 6px 6px 5px; background: #fff; border: 1px solid #c8c8c8; border-top: 0; border-radius: 0 0 6px 6px; box-shadow: 0 1px 2px #888; clip-path: inset(0 -3px -4px -3px); }
.sheet-tab span { flex: 1; height: 34px; line-height: 38px; background: linear-gradient(#f3f0f4, #b8aab9); font-size: 24px; font-weight: 600; color: #3f8452; }
.add-sheet { align-self: flex-start; width: 76px; height: 42px; padding-top: 4px; border-right: 2px solid #cfcfcf; }
.add-sheet svg { width: 20px; height: 20px; stroke: #555; stroke-width: 4; }

/* status bar */
.status { display: flex; align-items: center; height: 46px; padding: 0 48px 0 43px; border-top: 2px solid #9c9c9c; background: linear-gradient(#ffffff40, #00000008), linear-gradient(90deg, #dfdfdf 0 17%, #c4c4c4 23% 66%, #d0d0d0 74%, #e0e0e0 82%); font-size: 24px; color: #4c4c4c; }
.access { gap: 8px; margin-left: 38px; }
.access svg { width: 32px; height: 32px; stroke: #6a6a6a; stroke-width: 2; }
.view-tools { display: flex; align-items: center; height: 100%; margin-left: auto; }
.view { width: 72px; height: 100%; }
.view svg { width: 28px; height: 28px; stroke: #6a6a6a; stroke-width: 2; }
.view.on { background: #9b9b9b; }
.view.on svg { stroke: #fff; }
.zoom-step { width: 32px; height: 32px; }
.zoom-step.first { margin-left: 8px; }
.zoom-step svg { width: 16px; height: 16px; stroke: #666; stroke-width: 4; }
.zoom { appearance: none; width: 200px; height: 32px; margin: 0 6px; background: linear-gradient(#999, #999) no-repeat center / 100% 8px; border-radius: 4px; }
.zoom::-webkit-slider-thumb { appearance: none; width: 32px; height: 32px; border-radius: 50%; background: #fff; box-shadow: 0 1px 3px #0006; }
.zoom-value { width: 64px; margin-left: 26px; }
```
